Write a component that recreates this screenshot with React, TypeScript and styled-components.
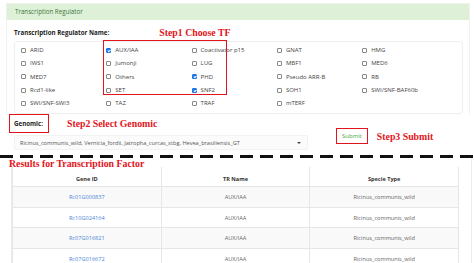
import React from "react"
import styled, { createGlobalStyle } from "styled-components"

const GlobalStyle = createGlobalStyle`
  html, body {
    margin: 0;
    padding: 0;
    background: #ffffff;
  }
  body {
    font-family: "Open Sans", "Noto Sans", Arial, sans-serif;
    color: #333;
  }
`;

const colors = {
  green: "#dff0d8",
  greenText: "#3c763d",
  red: "#e3141b",
  line: "#e6e6e6",
  link: "#4a86d8",
};

const regulators = [
  "ARID", "AUX/IAA", "Coactivator p15", "GNAT", "HMG",
  "IWS1", "Jumonji", "LUG", "MBF1", "MED6",
  "MED7", "Others", "PHD", "Pseudo ARR-B", "RB",
  "Rcd1-like", "SET", "SNF2", "SOH1", "SWI/SNF-BAF60b",
  "SWI/SNF-SWI3", "TAZ", "TRAF", "mTERF",
];
const checked = ["AUX/IAA", "PHD", "SNF2"];

const results = [
  { id: "Rc01G000837", tr: "AUX/IAA", specie: "Ricinus_communis_wild" },
  { id: "Rc10G024164", tr: "AUX/IAA", specie: "Ricinus_communis_wild" },
  { id: "Rc07G016821", tr: "AUX/IAA", specie: "Ricinus_communis_wild" },
  { id: "Rc07G016672", tr: "AUX/IAA", specie: "Ricinus_communis_wild" },
];

const Page = styled.div`
  width: 474px;
  height: 263px;
  overflow: hidden;
  padding-top: 3px;
  box-sizing: border-box;
`;

const Card = styled.div`
  margin: 0 4px 0 6px;
  border: 1px solid #eef3ec;
  border-bottom: none;
`;

const CardHeader = styled.div`
  height: 16px;
  background: ${colors.green};
  color: ${colors.greenText};
  font-size: 6.2px;
  line-height: 16px;
  padding-left: 8px;
`;

const CardBody = styled.div`
  padding: 4px 6px 0 7px;
`;

const LabelRow = styled.div`
  display: flex;
  align-items: center;
  height: 17px;
`;

const FieldLabel = styled.span<{ $boxed?: boolean }>`
  font-size: 6.2px;
  font-weight: 700;
  color: #222;
  ${p => p.$boxed && `
    display: inline-flex;
    align-items: center;
    box-sizing: border-box;
    height: 19px;
    border: 1.5px solid ${colors.red};
    padding: 0 5px 0 4px;
    margin-left: -5px;
  `}
`;

const Annotation = styled.span<{ $left: number }>`
  font-family: "Liberation Serif", "Times New Roman", serif;
  font-weight: 700;
  font-size: 9.8px;
  color: ${colors.red};
  margin-left: ${p => p.$left}px;
  white-space: nowrap;
`;

const OptionBox = styled.div`
  position: relative;
  border: 1px solid #f0f0f0;
  border-radius: 3px;
  padding: 1.5px 0 3px 6px;
  display: grid;
  grid-template-columns: repeat(5, 85.3px);
  grid-auto-rows: 13.3px;
`;

const Highlight = styled.div`
  position: absolute;
  left: 88px;
  top: -2px;
  width: 122px;
  height: 53px;
  border: 1.5px solid ${colors.red};
  pointer-events: none;
`;

const Option = styled.label`
  display: flex;
  align-items: center;
  gap: 4px;
  font-size: 6px;
  color: #444;
  white-space: nowrap;
`;

const Check = styled.input`
  appearance: none;
  margin: 0;
  width: 5px;
  height: 5px;
  border: 0.8px solid #888;
  border-radius: 1px;
  background: #fff;
  position: relative;
  &:checked {
    background: #1a73e8;
    border-color: #1a73e8;
  }
  &:checked::after {
    content: "";
    position: absolute;
    left: 1.2px;
    top: 0;
    width: 1.2px;
    height: 2.4px;
    border: solid #fff;
    border-width: 0 0.8px 0.8px 0;
    transform: rotate(45deg);
  }
`;

const Genomic = styled.div`
  padding: 0 0 0 14px;
  margin-top: 0.5px;
`;

const GenomicHead = styled.div`
  display: flex;
  align-items: center;
  height: 19px;
`;

const SelectRow = styled.div`
  display: flex;
  align-items: flex-start;
`;

const Select = styled.div`
  width: 294px;
  height: 15px;
  margin-top: 2px;
  box-sizing: border-box;
  border: 1px solid #f2f2f2;
  border-radius: 2px;
  background: #fbfbfb;
  display: flex;
  align-items: center;
  justify-content: space-between;
  padding: 0 6px 0 5px;
  font-size: 5.6px;
  color: #555;
  white-space: nowrap;
`;

const Caret = styled.span`
  width: 0;
  height: 0;
  border-left: 2px solid transparent;
  border-right: 2px solid transparent;
  border-top: 2.5px solid #444;
`;

const SubmitGroup = styled.div`
  display: flex;
  align-items: center;
  margin: -5px 0 0 28px;
`;

const SubmitFrame = styled.div`
  border: 1.5px solid ${colors.red};
  padding: 1px;
  display: flex;
`;

const SubmitButton = styled.button`
  font-family: "Open Sans", "Noto Sans", Arial, sans-serif;
  font-size: 6px;
  color: #3fa544;
  background: #fff;
  border: none;
  height: 12px;
  line-height: 12px;
  padding: 0 4px;
  cursor: pointer;
`;

const Dashes = styled.div`
  height: 3px;
  margin-top: 5px;
  background: repeating-linear-gradient(
    90deg,
    #111 0 13px,
    transparent 13px 20px
  );
`;

const ResultsPanel = styled.div`
  margin: 0 2px 0 11px;
  border-left: 1px solid #ececec;
  border-right: 1px solid #ececec;
  padding-right: 12px;
  position: relative;
`;

const ResultsTitle = styled.div`
  font-family: "Liberation Serif", "Times New Roman", serif;
  font-weight: 700;
  font-size: 9.8px;
  color: ${colors.red};
  margin-left: -3px;
  line-height: 11px;
  height: 9px;
  white-space: nowrap;
  position: relative;
  z-index: 1;
`;

const Table = styled.table`
  width: 100%;
  border-collapse: collapse;
  table-layout: fixed;
  font-size: 5.6px;
`;

const Th = styled.th`
  height: 16px;
  font-weight: 700;
  color: #333;
  border: 1px solid ${colors.line};
  border-top: none;
  padding: 0 0 3px;
  vertical-align: bottom;
`;

const Row = styled.tr<{ $shade: boolean }>`
  background: ${p => (p.$shade ? "#f9f9f9" : "#ffffff")};
`;

const Td = styled.td`
  height: 19.5px;
  padding: 0;
  text-align: center;
  color: #666;
  border: 1px solid ${colors.line};
`;

const GeneLink = styled.a`
  color: ${colors.link};
  text-decoration: none;
`;

export default function App() {
  return (
    <Page>
      <GlobalStyle />
      <Card>
        <CardHeader>Transcription Regulator</CardHeader>
        <CardBody>
          <LabelRow>
            <FieldLabel>Transcription Regulator Name:</FieldLabel>
            <Annotation $left={50}>Step1 Choose TF</Annotation>
          </LabelRow>
          <OptionBox>
            {regulators.map(name => (
              <Option key={name}>
                <Check type="checkbox" defaultChecked={checked.includes(name)} />
                {name}
              </Option>
            ))}
            <Highlight />
          </OptionBox>
        </CardBody>
      </Card>
      <Genomic>
        <GenomicHead>
          <FieldLabel $boxed>Genomic:</FieldLabel>
          <Annotation $left={18}>Step2 Select Genomic</Annotation>
        </GenomicHead>
        <SelectRow>
          <Select>
            Ricinus_communis_wild, Vernicia_fordii, Jatropha_curcas_xtbg, Hevea_brasiliensis_GT
            <Caret />
          </Select>
          <SubmitGroup>
            <SubmitFrame>
              <SubmitButton>Submit</SubmitButton>
            </SubmitFrame>
            <Annotation $left={9}>Step3 Submit</Annotation>
          </SubmitGroup>
        </SelectRow>
      </Genomic>
      <Dashes />
      <ResultsPanel>
        <ResultsTitle>Results for Transcription Factor</ResultsTitle>
        <Table>
          <thead>
            <tr>
              <Th>Gene ID</Th>
              <Th>TR Name</Th>
              <Th>Specie Type</Th>
            </tr>
          </thead>
          <tbody>
            {results.map((r, i) => (
              <Row key={r.id} $shade={i % 2 === 0}>
                <Td><GeneLink href="#">{r.id}</GeneLink></Td>
                <Td>{r.tr}</Td>
                <Td>{r.specie}</Td>
              </Row>
            ))}
          </tbody>
        </Table>
      </ResultsPanel>
    </Page>
  )
}
